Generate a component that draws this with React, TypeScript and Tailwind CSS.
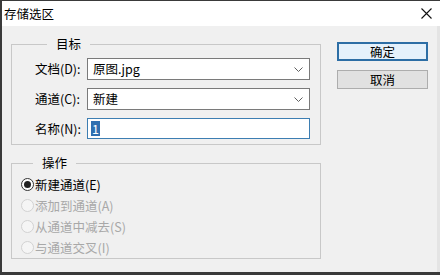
import React from 'react';

const font = { fontFamily: '"Noto Sans CJK SC", "Noto Sans", sans-serif' };

const Chevron = () => (
  <svg width="9" height="5" viewBox="0 0 9 5" className="text-[#606060]">
    <path d="M0.5 0.5 L4.5 4.5 L8.5 0.5" fill="none" stroke="currentColor" strokeWidth="1" />
  </svg>
);

const SelectRow: React.FC<{ label: string; value: string }> = ({ label, value }) => (
  <div className="flex items-center">
    <span className="w-[52px] text-black">{label}</span>
    <div className="flex h-[22px] w-[223px] items-center justify-between border border-[#7a7a7a] bg-white pl-[5px] pr-[6px]">
      <span>{value}</span>
      <Chevron />
    </div>
  </div>
);

const Radio: React.FC<{ label: string; checked?: boolean; disabled?: boolean }> = ({ label, checked, disabled }) => (
  <div className={`flex h-[21px] items-center gap-[1px] ${disabled ? 'text-[#a8a8a8]' : 'text-black'}`}>
    <span
      className={`flex h-[13px] w-[13px] items-center justify-center rounded-full border ${
        disabled ? 'border-[#d2d2d2] bg-[#f5f5f5]' : 'border-[#333] bg-white'
      }`}
    >
      {checked && <span className="h-[7px] w-[7px] rounded-full bg-[#222]" />}
    </span>
    <span>{label}</span>
  </div>
);

export default function App() {
  return (
    <div
      className="flex h-[275px] w-[440px] flex-col border-b-[3px] border-l-[2px] border-t border-[#3a3a3a] bg-[#f0f0f0] text-[12.5px] leading-[16px]"
      style={font}
    >
      <div className="flex h-[25px] items-center justify-between bg-white pl-[2px] pr-[8px]">
        <span className="text-[12.5px] text-black">存储选区</span>
        <svg width="11" height="11" viewBox="0 0 11 11">
          <path d="M0.5 0.5 L10.5 10.5 M10.5 0.5 L0.5 10.5" stroke="#111" strokeWidth="1.1" />
        </svg>
      </div>
      <div className="flex flex-1 border-r-[3px] border-[#e4e4e4] pl-[9px] pt-[10px]">
        <div className="flex w-[310px] flex-col gap-[10px]">
          <fieldset className="h-[109px] border border-[#c8c8c8] pl-[23px] pt-[6px]">
            <legend className="ml-[12px] px-[9px]">目标</legend>
            <div className="flex flex-col gap-[8px]">
              <SelectRow label="文档(D):" value="原图.jpg" />
              <SelectRow label="通道(C):" value="新建" />
              <div className="flex items-center">
                <span className="w-[52px] text-black">名称(N):</span>
                <div className="flex h-[21px] w-[223px] items-center border border-[#3d7eb2] bg-white pl-[3px]">
                  <span className="bg-[#2f6fb0] px-[1px] leading-[15px] text-white">1</span>
                </div>
              </div>
            </div>
          </fieldset>
          <fieldset className="h-[104px] border border-[#c8c8c8] pl-[9px] pt-[3px]">
            <legend className="ml-[12px] px-[9px]">操作</legend>
            <Radio label="新建通道(E)" checked />
            <Radio label="添加到通道(A)" disabled />
            <Radio label="从通道中减去(S)" disabled />
            <Radio label="与通道交叉(I)" disabled />
          </fieldset>
        </div>
        <div className="ml-[16px] flex flex-col gap-[9px] pt-[6px]">
          <button className="h-[19px] w-[91px] border-2 border-[#2d6ea5] bg-[#e5f1fb] text-[12.5px] leading-[14px] text-black">
            确定
          </button>
          <button className="h-[19px] w-[91px] border border-[#adadad] bg-[#e1e1e1] text-[12.5px] leading-[14px] text-black">
            取消
          </button>
        </div>
      </div>
    </div>
  );
}
